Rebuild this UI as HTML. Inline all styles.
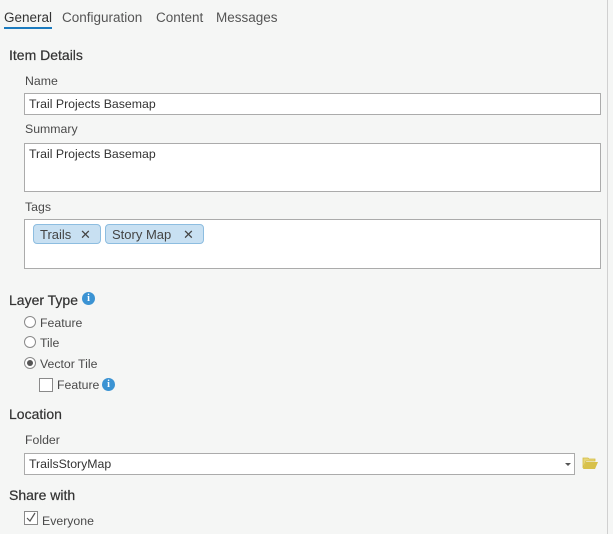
<!DOCTYPE html>
<html><head><style>
*{margin:0;padding:0;box-sizing:border-box}
body{width:613px;height:534px;background:#f5f6f5;font-family:"Liberation Sans",sans-serif;color:#4a4a4a;position:relative;overflow:hidden;font-size:12px}
.a{position:absolute;white-space:nowrap}
.h{font-size:14px;color:#333;-webkit-text-stroke:0.2px #333}
.l{font-size:12.3px}
.box{position:absolute;background:#fff;border:1px solid #ababab}
.rad{position:absolute;width:12px;height:12px;border:1px solid #8a8a8a;border-radius:50%;background:#fff}
.chip{position:absolute;top:224px;height:20px;background:#c8e0f2;border:1px solid #8dbde0;border-radius:4px;font-size:13px;line-height:19px;padding-left:6px;color:#444}
.info{position:absolute;width:13px;height:13px;border-radius:50%;background:#3b93d3;color:#fff;font-size:10px;font-weight:bold;text-align:center;line-height:13px;font-family:"Liberation Serif",serif}
</style></head><body>
<div style="position:absolute;right:5px;top:0;width:1px;height:534px;background:#d0d0d0"></div>
<div class="a" style="left:4px;top:10px;font-size:13.5px;color:#333">General</div>
<div class="a" style="left:62px;top:10px;font-size:13.5px;color:#555">Configuration</div>
<div class="a" style="left:156px;top:10px;font-size:13.5px;color:#555">Content</div>
<div class="a" style="left:216px;top:10px;font-size:13.5px;color:#555">Messages</div>
<div style="position:absolute;left:4px;top:27px;width:48px;height:2px;background:#1b7bbf"></div>
<div class="a h" style="left:9px;top:47px">Item Details</div>
<div class="a l" style="left:25px;top:74px">Name</div>
<div class="box" style="left:24px;top:93px;width:577px;height:22px"></div>
<div class="a l" style="left:29px;top:97px;color:#333">Trail Projects Basemap</div>
<div class="a l" style="left:25px;top:122px">Summary</div>
<div class="box" style="left:24px;top:143px;width:577px;height:49px"></div>
<div class="a l" style="left:29px;top:147px;color:#333">Trail Projects Basemap</div>
<div class="a l" style="left:25px;top:200px">Tags</div>
<div class="box" style="left:24px;top:219px;width:577px;height:50px"></div>
<div class="chip" style="left:33px;width:68px">Trails <span style="position:absolute;left:46px">✕</span></div>
<div class="chip" style="left:105px;width:99px">Story Map <span style="position:absolute;left:77px">✕</span></div>
<div class="a h" style="left:9px;top:292px">Layer Type</div>
<div class="info" style="left:82px;top:292px">i</div>
<div class="rad" style="left:24px;top:316px"></div><div class="a l" style="left:40px;top:316px">Feature</div>
<div class="rad" style="left:24px;top:336px"></div><div class="a l" style="left:40px;top:336px">Tile</div>
<div class="rad" style="left:24px;top:357px"><div style="position:absolute;left:2px;top:2px;width:6px;height:6px;border-radius:50%;background:#555"></div></div><div class="a l" style="left:40px;top:357px">Vector Tile</div>
<div class="box" style="left:39px;top:378px;width:14px;height:14px;border-color:#8a8a8a"></div>
<div class="a l" style="left:57px;top:378px">Feature</div>
<div class="info" style="left:102px;top:378px">i</div>
<div class="a h" style="left:9px;top:406px">Location</div>
<div class="a l" style="left:25px;top:433px">Folder</div>
<div class="box" style="left:24px;top:453px;width:551px;height:22px"></div>
<div class="a l" style="left:29px;top:457px;color:#333">TrailsStoryMap</div>
<div style="position:absolute;left:565px;top:463px;border-left:3px solid transparent;border-right:3px solid transparent;border-top:3px solid #555"></div>
<svg style="position:absolute;left:582px;top:457px" width="17" height="13"><path d="M1 1h5l1 1h6v2H4L1 11z" fill="#e7d67a" stroke="#d4bd3f" stroke-width="0.8"/><path d="M1 12L4 5h12l-3 7z" fill="#d8c14a"/></svg>
<div class="a h" style="left:9px;top:487px">Share with</div>
<div class="box" style="left:24px;top:511px;width:14px;height:14px;border-color:#8a8a8a"></div>
<svg style="position:absolute;left:25px;top:512px" width="12" height="12"><path d="M2 6l3 3 5-8" fill="none" stroke="#555" stroke-width="1.2"/></svg>
<div class="a l" style="left:42px;top:514px">Everyone</div>
</body></html>
